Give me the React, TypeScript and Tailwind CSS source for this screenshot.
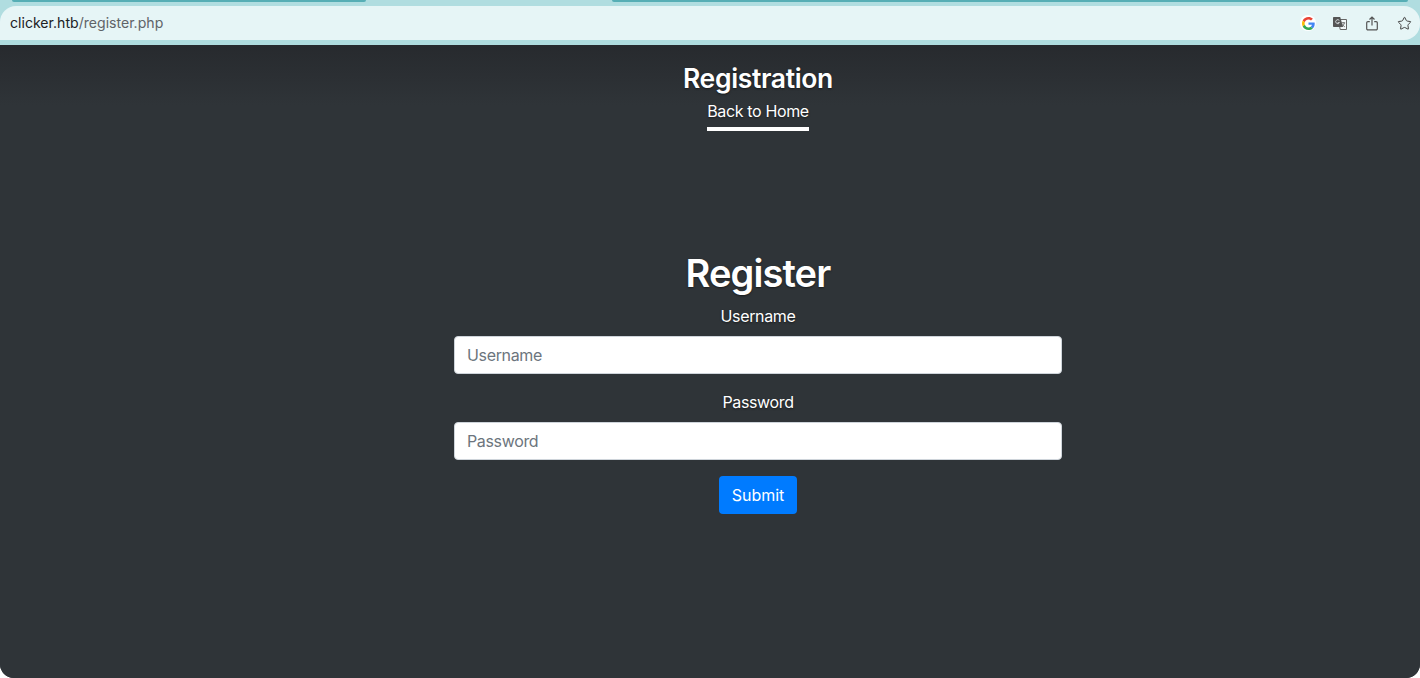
import { Star } from "lucide-react";

function GoogleIcon() {
  return (
    <span className="flex h-[16px] w-[16px] items-center justify-center rounded-full bg-white">
      <svg width="13" height="13" viewBox="0 0 48 48" aria-hidden>
        <path fill="#EA4335" d="M24 9.500c3.500 0 6.700 1.200 9.200 3.600l6.900-6.900C35.900 2.400 30.500 0 24 0 14.600 0 6.500 5.400 2.600 13.200l8 6.200C12.500 13.600 17.800 9.500 24 9.500z" />
        <path fill="#4285F4" d="M46.900 24.500c0-1.600-.2-3.100-.4-4.500H24v9h12.900c-.6 3-2.200 5.500-4.700 7.200l7.700 6c4.500-4.200 7-10.300 7-17.700z" />
        <path fill="#FBBC05" d="M10.500 28.600c-.5-1.400-.8-3-.8-4.600s.3-3.200.8-4.600l-8-6.200C.9 16.500 0 20.100 0 24s.9 7.500 2.600 10.800l7.900-6.200z" />
        <path fill="#34A853" d="M24 48c6.500 0 11.900-2.100 15.900-5.800l-7.700-6c-2.200 1.400-4.900 2.300-8.200 2.300-6.200 0-11.500-4.200-13.400-9.800l-8 6.200C6.500 42.600 14.600 48 24 48z" />
      </svg>
    </span>
  );
}

function TranslateIcon() {
  return (
    <svg width="14" height="13" viewBox="0 0 14 13" aria-hidden>
      <path fill="#f4f9fa" stroke="#666" strokeWidth="1" d="M5.500 2.500h8v10h-6.300z" />
      <path fill="#555" d="M.8 0h6.400l2.900 10H.8a.8.8 0 0 1-.8-.8V.8A.8.8 0 0 1 .8 0z" />
      <path fill="none" stroke="#cfd4d6" strokeWidth="1" d="M6.400 3.600A2 2 0 1 0 6.500 5.600H4.700" />
      <path fill="none" stroke="#666" strokeWidth=".9" d="M8.200 5.800h4M10.200 5v.8M11.400 5.800c-.4 1.800-1.300 3-2.600 3.900M9.300 7.400c.5 1 1.300 1.800 2.500 2.400" />
    </svg>
  );
}

function ShareIcon() {
  return (
    <svg width="12" height="15" viewBox="0 0 12 15" fill="none" stroke="#555" strokeWidth="1.200" aria-hidden>
      <path d="M3.800 5.600H1.900a1.200 1.200 0 0 0-1.200 1.200v5.900a1.200 1.200 0 0 0 1.200 1.200h8.200a1.200 1.200 0 0 0 1.200-1.200V6.800a1.200 1.200 0 0 0-1.200-1.200H8.200" />
      <path d="M6 9.500V1.200M3.500 3.500 6 1l2.500 2.500" />
    </svg>
  );
}

function Field({ label }: { label: string }) {
  return (
    <div className="mb-4">
      <label className="mb-2 block text-center text-base leading-6 tracking-[-0.35px] text-white">{label}</label>
      <input
        placeholder={label}
        className="block h-[38px] w-full rounded border border-[#ced4da] bg-white px-3 text-base tracking-[-0.35px] text-[#495057] outline-none placeholder:text-[#6c757d]"
      />
    </div>
  );
}

export default function App() {
  return (
    <div className="flex h-[678px] flex-col overflow-hidden rounded-b-[14px] bg-[#2f3438] font-['Inter','Liberation_Sans',sans-serif] text-white">
      <div className="relative h-[45px] shrink-0 bg-[#b0dde0] pt-[6px]">
        <div className="absolute left-0 top-0 flex w-full">
          <div className="ml-[12px] h-[2px] w-[354px] rounded-b bg-[#56aeb5]" />
          <div className="ml-[246px] h-[2px] w-[796px] rounded-b bg-[#56aeb5]" />
        </div>
        <div className="flex h-[34px] items-center justify-between rounded-r-[16px] rounded-tl-[16px] bg-[#e6f5f6] pl-[10px] pr-[8px] text-[14.100px]">
          <div>
            <span className="text-[#202124]">clicker.htb</span>
            <span className="text-[#5f6368]">/register.php</span>
          </div>
          <div className="flex items-center gap-[17px] text-[#444]">
            <GoogleIcon />
            <TranslateIcon />
            <span className="mx-[2px] flex">
              <ShareIcon />
            </span>
            <Star size={15} strokeWidth={1.6} />
          </div>
        </div>
      </div>

      <div className="flex flex-1 flex-col items-center bg-[linear-gradient(#272a2e,#2f3438_60px)] pl-[96px] pt-[16px] [text-shadow:0_1px_2px_rgba(0,0,0,0.5)]">
        <h3 className="text-center text-[26.500px] leading-[34px] font-semibold tracking-[-0.35px]">Registration</h3>
        <a className="mt-[4px] border-b-[4px] border-white pb-[4px] text-base leading-6 tracking-[-0.35px]">
          Back to Home
        </a>

        <main className="mt-[117px] w-[608px]">
          <h1 className="mb-[7px] pt-[1px] text-center text-[38px] leading-[48px] font-semibold tracking-[-0.9px]">
            Register
          </h1>
          <Field label="Username" />
          <Field label="Password" />
          <div className="text-center">
            <button className="h-[38px] rounded bg-[#007bff] px-[13px] text-base text-white">Submit</button>
          </div>
        </main>
      </div>
    </div>
  );
}
